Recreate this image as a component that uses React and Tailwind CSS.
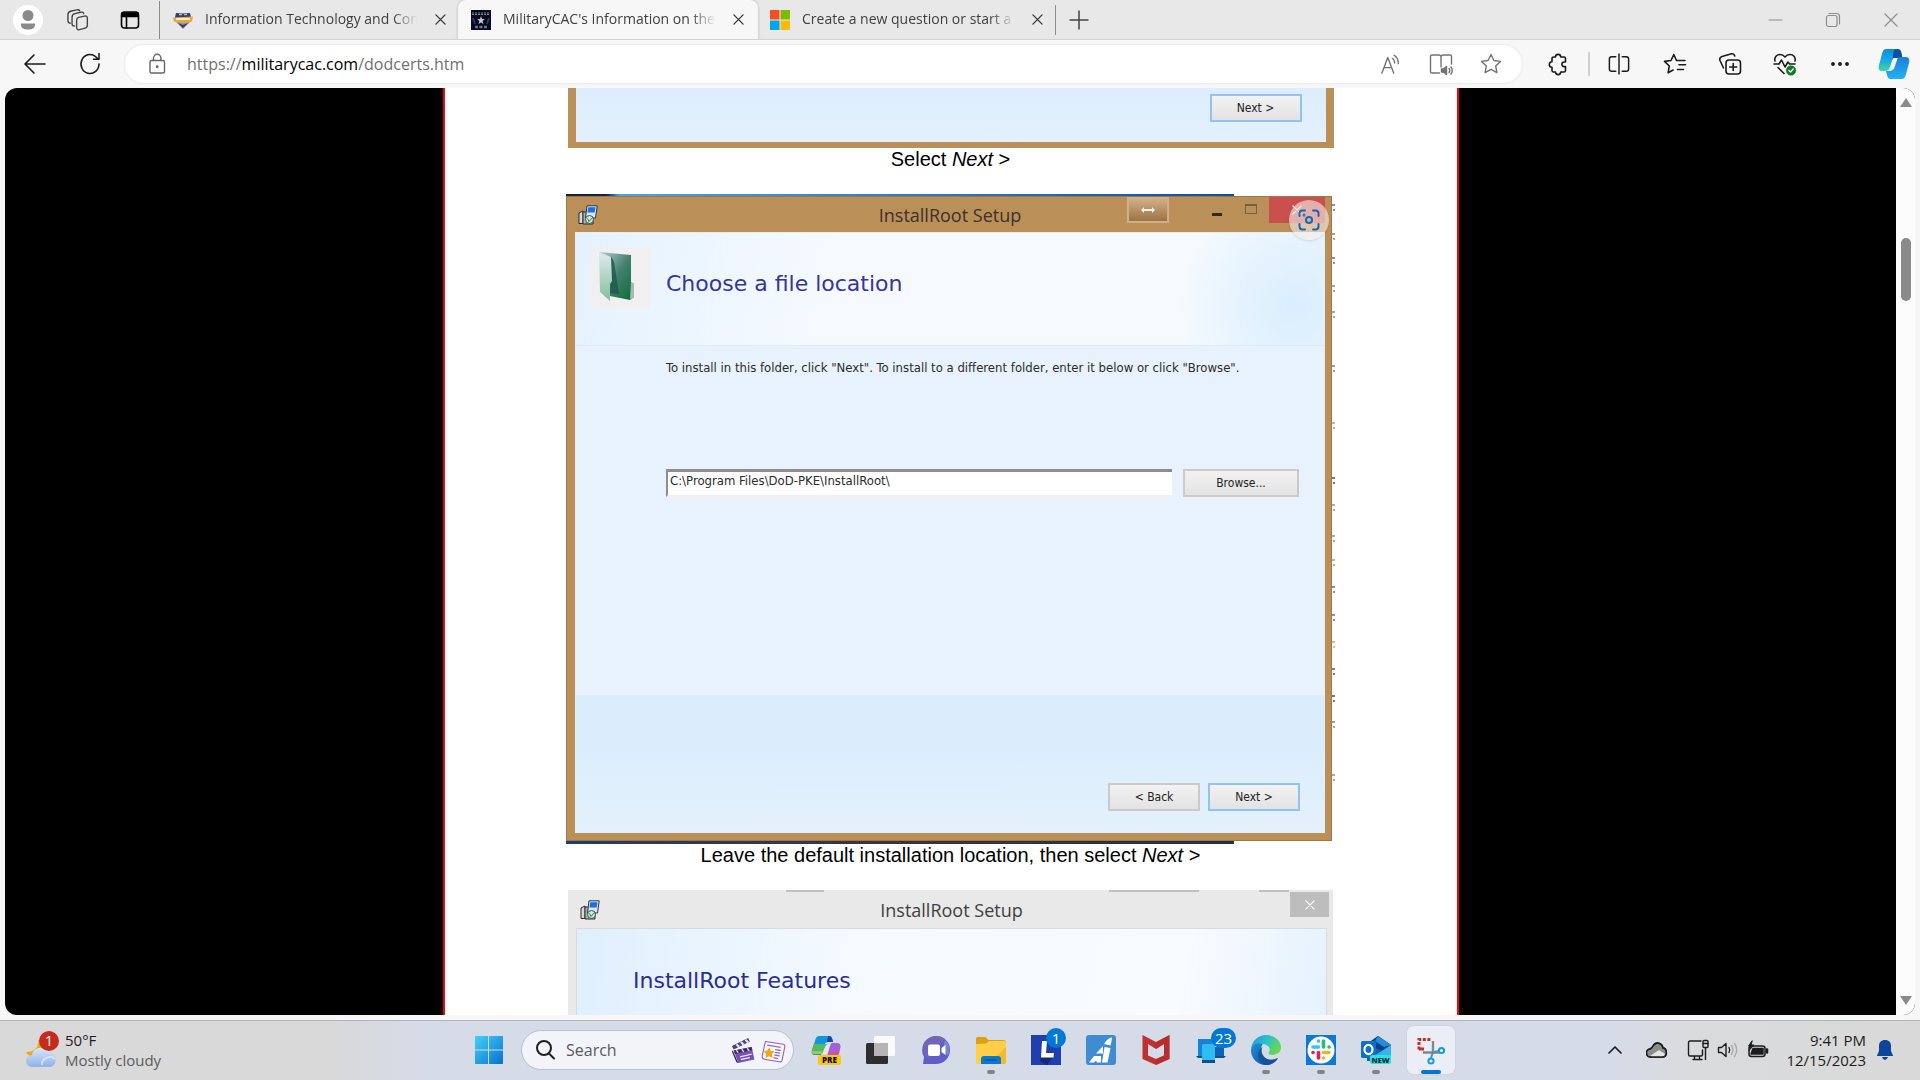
import React from "react";

const uiFont = "font-['Open_Sans','Noto_Sans',sans-serif]";
const dialogFont = "font-['DejaVu_Sans_Condensed','DejaVu_Sans',sans-serif]";

function Icon({ children, className = "size-6", box = "0 0 24 24", stroke = 1.4 }) {
  return (
    <svg viewBox={box} className={className} fill="none" stroke="currentColor" strokeWidth={stroke} strokeLinecap="round" strokeLinejoin="round" aria-hidden="true">
      {children}
    </svg>
  );
}

function IconButton({ label, className = "", children }) {
  return (
    <button type="button" aria-label={label} className={`flex shrink-0 items-center justify-center ${className}`}>
      {children}
    </button>
  );
}

/* ---------- tab strip ---------- */

function CloseGlyph({ className = "size-3" }) {
  return (
    <Icon box="0 0 12 12" className={className} stroke={1.4}>
      <path d="M1 1l10 10M11 1L1 11" />
    </Icon>
  );
}

function ShieldFavicon() {
  return (
    <svg viewBox="0 0 20 20" className="size-5 shrink-0" aria-hidden="true">
      <path d="M3 3h14l1 8-3 3-5 5-5-5-3-3z" fill="#8d8fa8" />
      <path d="M3 3l7 1 7-1 1 5H2z" fill="#2c3f78" />
      <path d="M6 4.500h3M11 4.500h3" stroke="#c9b98a" strokeWidth="1.500" />
      <path d="M0 7.500l20-1-1 5-9 2-9-2z" fill="#e8a63c" />
      <path d="M3 8h14v2H3z" fill="#f3ead7" />
      <path d="M5 13l5 2 5-2-5 5z" fill="#263c78" />
    </svg>
  );
}

function CacFavicon() {
  return (
    <svg viewBox="0 0 20 20" className="size-5 shrink-0" aria-hidden="true">
      <path d="M0 0h20v20H0z" fill="#070a18" />
      <path d="M1 3h18M1 4.500h18" stroke="#7b8398" strokeWidth="1" strokeDasharray="2 1" />
      <path d="M10 6l1 3 2.800.2-2.200 1.800.9 3-2.500-1.600L7.500 14l.9-3-2.200-1.800L9 9z" fill="#c4c9d2" />
      <path d="M4 17h12" stroke="#5d73a5" strokeWidth="2.500" strokeDasharray="3 1.500" />
      <path d="M2 8l2 6M18 8l-2 6" stroke="#27365f" strokeWidth="2" />
    </svg>
  );
}

function MicrosoftFavicon() {
  return (
    <svg viewBox="0 0 20 20" className="size-5 shrink-0" aria-hidden="true">
      <path d="M0 0h9.500v9.500H0z" fill="#f25022" />
      <path d="M10.500 0H20v9.500h-9.500z" fill="#7fba00" />
      <path d="M0 10.500h9.500V20H0z" fill="#00a4ef" />
      <path d="M10.500 10.500H20V20h-9.500z" fill="#ffb900" />
    </svg>
  );
}

function Tab({ icon, title, active, width }) {
  return (
    <div className={`flex h-10 items-center gap-3 ${width} ${active ? "rounded-t-lg bg-[#f7f7f7] shadow-[0_0_3px_rgba(0,0,0,0.25)]" : ""}`}>
      {icon}
      <a href="#tab" className="min-w-0 flex-1 overflow-hidden whitespace-nowrap pb-0.5 text-sm leading-6 text-[#3f3f3f] [mask-image:linear-gradient(90deg,#000_88%,transparent)]">
        {title}
      </a>
      <IconButton label="Close tab" className="size-5 text-[#333]">
        <CloseGlyph className="size-[11px]" />
      </IconButton>
    </div>
  );
}

function TabStrip() {
  return (
    <header className="flex h-10 shrink-0 items-center overflow-hidden border-b border-[#d2d2d2] bg-[#e8e8e8]">
      <div className="flex w-40 shrink-0 items-center border-r border-[#8c8c8c] py-1 pl-[13px]">
        <IconButton label="Profile" className="size-[30px] rounded-full bg-white">
          <svg viewBox="0 0 30 30" className="size-[30px]" aria-hidden="true">
            <circle cx="15" cy="10.500" r="5.500" fill="#8a8a8a" />
            <path d="M8 18.500h14q1 6-7 6t-7-6z" fill="#8a8a8a" />
          </svg>
        </IconButton>
        <IconButton label="Workspaces" className="ml-[23px] size-6 text-[#444]">
          <Icon className="size-[22px]" stroke={1.500}>
            <path d="M12.500 9.200l6.500-1.500q3-.5 3.200 2v8q0 2.500-2.500 3.200l-6 1.600q-3 .6-3.200-2v-8q0-2.700 2-3.300z" />
            <path d="M8 18.500c-1.500 0-2.500-.8-2.500-2.500V9c0-2.500 1-3.500 3-4l6.500-1.500c2-.4 3 .3 3.200 1.500" />
            <path d="M3.500 15.500c-1.500-.3-2.500-1-2.500-3V6.500c0-2.500 1-3.500 3-4L10.500 1c2-.4 3 .2 3.300 1" />
          </Icon>
        </IconButton>
        <IconButton label="Tab actions" className="ml-[30px] size-5 text-black">
          <Icon box="0 0 20 20" className="size-5" stroke={1.600}>
            <rect x="1.500" y="2" width="17" height="16" rx="3" />
            <path d="M2 3h16v3.500H2z" fill="currentColor" />
            <path d="M6.500 7v11" />
          </Icon>
        </IconButton>
      </div>
      <nav aria-label="Tabs" className="flex">
        <Tab icon={<ShieldFavicon />} title="Information Technology and Con" width="w-[298px] pl-[13px] pr-2" />
        <Tab icon={<CacFavicon />} title="MilitaryCAC's Information on the" active width="w-[300px] pl-[13px] pr-2.5" />
        <Tab icon={<MicrosoftFavicon />} title="Create a new question or start a d" width="w-[297px] pl-3 pr-2" />
      </nav>
      <IconButton label="New tab" className="h-[30px] w-[46px] border-l border-[#8c8c8c] text-[#444]">
        <Icon box="0 0 20 20" className="size-5" stroke={1.500}>
          <path d="M10 1v18M1 10h18" />
        </Icon>
      </IconButton>
      <div className="ml-auto flex text-[#8d8d8d]">
        <IconButton label="Minimize" className="h-10 w-[58px]">
          <Icon box="0 0 16 16" className="size-4" stroke={1}><path d="M2 8h13" /></Icon>
        </IconButton>
        <IconButton label="Restore" className="h-10 w-[58px]">
          <Icon box="0 0 16 16" className="size-4" stroke={1.200}>
            <rect x="1.500" y="3.500" width="10.500" height="11" rx="2" />
            <path d="M4 1.500h7.500q3 0 3 3V12" />
          </Icon>
        </IconButton>
        <IconButton label="Close" className="h-10 w-[58px]">
          <Icon box="0 0 16 16" className="size-4" stroke={1.200}><path d="M2 2l12 12M14 2L2 14" /></Icon>
        </IconButton>
      </div>
    </header>
  );
}

/* ---------- address bar ---------- */

const starPath = "M12 2.500l2.900 6 6.600.9-4.800 4.600 1.200 6.600L12 17.400l-5.900 3.200 1.200-6.600L2.500 9.400l6.600-.9z";

function CopilotLogo() {
  return (
    <svg viewBox="0 0 32 32" className="size-8" aria-hidden="true">
      <defs>
        <linearGradient id="cpA" x1="0" y1="0" x2="0" y2="1">
          <stop offset="0" stopColor="#0a8ee0" /><stop offset=".5" stopColor="#19a8e8" /><stop offset="1" stopColor="#43d69a" />
        </linearGradient>
        <linearGradient id="cpB" x1="0" y1="0" x2="0" y2="1">
          <stop offset="0" stopColor="#1b7fd8" /><stop offset="1" stopColor="#22b2f6" />
        </linearGradient>
      </defs>
      <path d="M9 1h10c3 0 3.500 2 4.500 6l.5 3h-4c-3 0-5 0-6 3l-2 6c-1 3-2 4-5 4H4c-3 0-4-2-3-6L4 6c1-4 2-5 5-5z" fill="url(#cpA)" />
      <path d="M17 1h2c3 0 4 1 4.500 4l1 5H15c0-4 0-7 2-9z" fill="#124f9c" />
      <path d="M23 31H13c-3 0-3.500-2-4.500-6l-.5-2h2c4 0 6-1 7-5l2-6c.5-2 1-3 3-3h5c4 0 5 2 4 6l-3 11c-1 4-2 5-5 5z" fill="url(#cpB)" />
      <path d="M15.500 10H20c-2 0-2.500 1-3 3l-2 6c-.5 2.500-1.500 3.500-4 3.700 1-1 1.500-2 2-4z" fill="#f7f7f7" />
    </svg>
  );
}

function Toolbar() {
  return (
    <div className="flex h-12 shrink-0 items-center bg-[#f7f7f7] pl-2 text-[#1b1b1b]">
      <IconButton label="Back" className="h-10 w-[54px]">
        <Icon className="size-6" stroke={1.600}><path d="M22 12H2.500M11 3L2 12l9 9" /></Icon>
      </IconButton>
      <IconButton label="Refresh" className="h-10 w-[56px]">
        <Icon className="size-6" stroke={1.600}><path d="M21 12a9 9.500 0 1 1-3.500-7.500L20 7M21 1.500V7.200h-5.500" /></Icon>
      </IconButton>
      <div className="mx-[7px] flex h-[38px] min-w-0 flex-1 items-center rounded-full bg-white pl-5 pr-1.5 shadow-[0_0_3px_rgba(0,0,0,0.1)]">
        <Icon className="size-6 shrink-0 text-[#666]" stroke={1.400}>
          <rect x="5" y="8.500" width="14.500" height="12.500" rx="1.500" />
          <path d="M8.500 8.500V6a3.700 3.700 0 0 1 7.400 0v2.500" />
          <circle cx="12.200" cy="14.700" r=".7" fill="currentColor" />
        </Icon>
        <a href="https://militarycac.com/dodcerts.htm" className="ml-[18px] min-w-0 flex-1 truncate text-base leading-6 text-[#717171]">
          https://<span className="text-black">militarycac.com</span>/dodcerts.htm
        </a>
        <div className="flex items-center text-[#737373]">
          <IconButton label="Read aloud" className="size-[50px]">
            <Icon className="size-[22px]" stroke={1.500}>
              <path d="M2 22L8.500 5 15 22M4.500 16h8M13.500 6c2 1 2.500 3 2.500 5M15.500 2.500c3.500 2 4.500 5 4.500 9" />
            </Icon>
          </IconButton>
          <IconButton label="Immersive reader" className="size-[50px]">
            <Icon className="size-6" stroke={1.400}>
              <path d="M22.500 12V4.500q0-1.500-1.500-1.500h-6.500Q12 3 12 5q0-2-2.500-2H3Q1.500 3 1.500 4.500v15Q1.500 21 3 21h7.500M12 5v10" />
              <path d="M12.500 17h2l3-2.500v8l-3-2.500h-2z" fill="currentColor" />
              <path d="M20 16.500q1.500 2 0 4M22 15q2.500 3.500 0 7" />
            </Icon>
          </IconButton>
          <IconButton label="Add to favorites" className="size-[50px]">
            <Icon className="size-6" stroke={1.400}><path d={starPath} /></Icon>
          </IconButton>
        </div>
      </div>
      <IconButton label="Extensions" className="h-10 w-[58px]">
        <Icon className="size-6" stroke={1.600}>
          <path d="M8 5h1.500a2.600 2.600 0 0 1 5.200 0H18q1.500 0 1.500 1.500V10h-1.300a2.300 2.300 0 0 0 0 4.600h1.300v3.900q0 1.500-1.500 1.500h-3.300a2.600 2.600 0 0 1-5.200 0H7.500Q6 20 6 18.500V15.200a2.700 2.700 0 0 1 0-5.400V6.500Q6 5 8 5z" />
        </Icon>
      </IconButton>
      <div className="mx-px h-6 w-0.5 bg-[#cfcfcf]" />
      <IconButton label="Split screen" className="h-10 w-[56px]">
        <Icon className="size-[22px]" stroke={1.600}>
          <path d="M8.500 4H4Q1.500 4 1.500 6.500v11Q1.500 20 4 20h4.500M15.500 4H20q2.500 0 2.500 2.500v11Q22.500 20 20 20h-4.500M12 1v22" />
        </Icon>
      </IconButton>
      <IconButton label="Favorites" className="h-10 w-[55px]">
        <Icon className="size-6" stroke={1.600}>
          <path d="M13.500 8.500L10.800 2.500 8 8.500l-6.500.9 4.800 4.600-1.200 6.800 5-2.800M13.500 8.500h8.500M16 12.800h6.500M14.500 17.500h6" />
        </Icon>
      </IconButton>
      <IconButton label="Collections" className="h-10 w-[55px]">
        <Icon className="size-6" stroke={1.600}>
          <rect x="8" y="8" width="14.500" height="14" rx="3" />
          <path d="M15.200 11.500v7M11.700 15h7M5.500 16L2 8.500q-1-3 2-4l9.500-2.700q2.500-.5 3.300 2.200" />
        </Icon>
      </IconButton>
      <IconButton label="Browser essentials" className="h-10 w-[55px]">
        <Icon className="size-6" stroke={1.600}>
          <path d="M2 9C1 5 4 2.500 7 2.500q3 0 5 2.500 2-2.500 5-2.500c3 0 6 2.500 5 6.500M1 12h5l2.500-4 3.500 7 3-5 1.500 2H22M5 15.500l6 6" />
          <circle cx="18" cy="18.500" r="4.800" fill="#107c25" stroke="#107c25" strokeWidth=".5" />
          <path d="M16 18.500l1.500 1.500 2.700-3" stroke="#fff" strokeWidth="1.300" />
        </Icon>
      </IconButton>
      <IconButton label="Settings and more" className="h-10 w-[55px]">
        <svg viewBox="0 0 18 4" className="h-1 w-[18px]" fill="currentColor" aria-hidden="true">
          <circle cx="2" cy="2" r="1.900" /><circle cx="9" cy="2" r="1.900" /><circle cx="16" cy="2" r="1.900" />
        </svg>
      </IconButton>
      <IconButton label="Copilot" className="h-10 w-[53px]">
        <CopilotLogo />
      </IconButton>
    </div>
  );
}

/* ---------- installer screens ---------- */

function SetupIcon() {
  return (
    <svg viewBox="0 0 20 20" className="size-5 shrink-0" aria-hidden="true">
      <path d="M1 8l4-2v12.500H1z" fill="#d9dad6" stroke="#2a2a2a" strokeWidth="1" />
      <path d="M5 7h10v12H5z" fill="#a9b2a4" stroke="#2f2f2f" strokeWidth="1" />
      <path d="M9 .8h10.200L17.500 13H7.500z" fill="#dfe6ef" stroke="#24364f" strokeWidth="1" />
      <path d="M10.200 2.200h7.300L16.700 7.500H9.500z" fill="#1c6fe0" />
      <circle cx="11.500" cy="14.500" r="4" fill="#d5e3d9" stroke="#35584a" />
      <path d="M9.500 13.500l1.500 3 4-4.500" stroke="#1f7c5a" fill="none" />
    </svg>
  );
}

function FolderArt() {
  return (
    <svg viewBox="0 0 60 60" className="size-[60px] shrink-0 bg-[#f0f0f0]" aria-hidden="true">
      <defs>
        <linearGradient id="fBack" x1="0" y1="0" x2="1" y2="1">
          <stop offset="0" stopColor="#b5cdd2" /><stop offset=".5" stopColor="#42806f" /><stop offset="1" stopColor="#0b6b35" />
        </linearGradient>
        <linearGradient id="fFront" x1="0" y1="0" x2="0" y2="1">
          <stop offset="0" stopColor="#dfe9ee" /><stop offset="1" stopColor="#86bfa0" />
        </linearGradient>
      </defs>
      <path d="M8 4l32 3v27l3 2v13l-4 3-20-4z" fill="url(#fBack)" />
      <path d="M20 8l3 6 5 32-9-1z" fill="#1d5a4c" opacity=".85" />
      <path d="M8 4l12 5 1 24-2 3v17L9 44z" fill="url(#fFront)" />
      <path d="M40 34l3 2v13l-4 3z" fill="#a4bcb2" />
    </svg>
  );
}

function DialogButton({ children, width = "w-[92px]", primary }) {
  return (
    <button
      type="button"
      className={`${dialogFont} ${width} h-7 shrink-0 border-2 bg-linear-to-b from-[#f2f2f2] to-[#e3e3e3] text-xs text-[#222] ${primary ? "border-[#8fc3f2]" : "border-[#cacaca]"}`}
    >
      {children}
    </button>
  );
}

function Caption({ children }) {
  return <p className="mb-[23px] text-center font-['Liberation_Sans',Arial,sans-serif] text-xl leading-[23px] text-black">{children}</p>;
}

function PreviousScreen() {
  return (
    <section aria-label="Previous step" className="w-[766px] max-w-full border-x-8 border-b-[6px] border-[#bb8f58] bg-linear-to-b from-[#dcedfd] to-[#e4f1fc]">
      <div className="flex h-[54px] items-start justify-end pr-6 pt-1.5">
        <DialogButton primary>Next &gt;</DialogButton>
      </div>
    </section>
  );
}

const edgeMarks = [
  [9, "#665f52"], [38, "#9b8046"], [62, "#5a63ad"], [90, "#7c858c"], [116, "#7c858c"], [170, "#777"],
  [227, "#9797a0"], [282, "#4b4144"], [309, "#7f92a4"], [340, "#888"], [364, "#bb9850"], [391, "#5b5ea5"], [419, "#5b5ea5"],
  [446, "#c5a769"], [473, "#46486e"], [500, "#444"], [526, "#9c7c42"], [579, "#888"],
];

function LocationScreen() {
  return (
    <section aria-label="Choose a file location" className="relative w-[769px] max-w-full">
      <div className="mr-[101px] h-0.5 bg-linear-to-r from-[#12213c] from-6% via-[#4aa5e8] via-8% to-[#0d4f9e]" />
      <div className="flex">
        <div className="min-w-0 flex-1 border border-[#9d784b] bg-[#bb8f58] pb-[7px] pl-2 pr-1.5">
          <div className="grid h-[35px] grid-cols-[1fr_auto_1fr]">
            <div className="flex items-center pl-[3px]"><SetupIcon /></div>
            <h2 className={`${uiFont} self-center text-lg leading-7 text-[#3a322c]`}>InstallRoot Setup</h2>
            <div className="flex items-start justify-end">
              <IconButton label="Resize" className="mr-7 h-[26px] w-[42px] border-2 border-[#cfb08a] bg-linear-to-b from-[#cfae88] to-[#9d7443]">
                <svg viewBox="0 0 16 8" className="h-2 w-4" aria-hidden="true">
                  <path d="M1 4l3-3v2h8V1l3 3-3 3V5H4v2z" fill="#f4efe8" />
                </svg>
              </IconButton>
              <IconButton label="Minimize setup" className="h-7 w-10 pt-1.5"><span className="h-[3px] w-2.5 bg-[#30281f]" /></IconButton>
              <IconButton label="Maximize setup" className="mr-1 h-6 w-7"><span className="h-2.5 w-3 border border-t-2 border-[#75603f]" /></IconButton>
              <IconButton label="Close setup" className="h-[26px] w-14 bg-[#c9504f] text-white"><CloseGlyph className="size-2.5" /></IconButton>
            </div>
          </div>
          <div className="border border-[#e6eef5] bg-[#e7f2fd]">
            <div className="flex h-28 items-start bg-[radial-gradient(circle_at_96%_65%,#daeefd_0%,transparent_16%),linear-gradient(100deg,#e4f2fe_0%,#f6faff_35%,#f6faff_80%,#edf6fe_100%)] pl-[15px] pt-[15px]">
              <FolderArt />
              <h1 className="ml-[15px] mt-5 font-['DejaVu_Sans',sans-serif] text-[22px] leading-8 text-[#3535a0]">Choose a file location</h1>
            </div>
            <div className={`${dialogFont} h-[350px] border-t border-[#dcebf6] pl-[90px] pr-[25px] pt-3 text-[13px] text-[#2c2c2c]`}>
              <p className="whitespace-nowrap leading-5">To install in this folder, click "Next". To install to a different folder, enter it below or click "Browse".</p>
              <div className="mt-[91px] flex items-center gap-[11px]">
                <input
                  type="text"
                  aria-label="Install folder"
                  defaultValue="C:\Program Files\DoD-PKE\InstallRoot\"
                  className="h-7 min-w-0 flex-1 border-b-2 border-l-2 border-t-[3px] border-[#8d8d8d] border-b-[#efefef] bg-white pb-1.5 pl-0.5"
                />
                <DialogButton width="w-[116px]">Browse...</DialogButton>
              </div>
            </div>
            <div className="flex h-[137px] items-end justify-end gap-2 bg-linear-to-b from-[#dbedfd] from-40% to-[#e4f1fc] pb-[21px] pr-6">
              <DialogButton>&lt; Back</DialogButton>
              <DialogButton primary>Next &gt;</DialogButton>
            </div>
          </div>
        </div>
        <svg viewBox="0 0 3 640" className="h-[640px] w-[3px]" aria-hidden="true">
          {edgeMarks.map(([y, color]) => (
            <path key={y} d={`M0 ${y}h3M1 ${y + 5}h2`} stroke={color} strokeWidth="2" fill="none" opacity=".7" />
          ))}
        </svg>
      </div>
      <div className="mr-[101px] h-[3px] bg-linear-to-r from-[#1f3c6b] via-[#3a3438] to-[#1d3340]" />
      <IconButton label="Visual search" className="absolute right-1.5 top-1.5 size-10 rounded-full bg-[#f4eee8]/60 text-[#1967b3] shadow-sm">
        <Icon className="size-6" stroke={2}>
          <path d="M2.500 8V5.500q0-3 3-3H8M16 2.500h2.500q3 0 3 3V8M21.500 16v2.500q0 3-3 3H16M8 21.500H5.500q-3 0-3-3V16" />
          <circle cx="12" cy="12" r="3" /><circle cx="7" cy="7" r=".5" />
        </Icon>
      </IconButton>
    </section>
  );
}

function FeaturesScreen() {
  return (
    <section aria-label="InstallRoot features" className="w-[765px] max-w-full bg-[#e9e9e9] pb-2 pl-2 pr-1.5">
      <div className="h-0.5 w-full bg-[linear-gradient(90deg,transparent_28%,#999_28%_33%,transparent_33%_71%,#999_71%_83%,transparent_83%_91%,#999_91%_95%,transparent_95%)] opacity-50" />
      <div className="grid h-9 grid-cols-[1fr_auto_1fr]">
        <div className="flex items-center pl-1"><SetupIcon /></div>
        <h2 className={`${uiFont} self-center text-lg leading-7 text-[#3f3f3f]`}>InstallRoot Setup</h2>
        <div className="-mr-0.5 flex items-start justify-end">
          <IconButton label="Close features" className="h-[25px] w-[39px] bg-[#bdbdbd] text-white"><CloseGlyph className="size-2.5" /></IconButton>
        </div>
      </div>
      <div className="h-[400px] border border-[#d6dbe0] bg-[linear-gradient(100deg,#dfefff_0%,#f5faff_35%,#f8fbff_75%,#deeefd_100%)] pl-14 pt-9">
        <h2 className="font-['DejaVu_Sans',sans-serif] text-[22px] leading-8 text-[#2c2c96]">InstallRoot Features</h2>
      </div>
    </section>
  );
}

function Page() {
  return (
    <div className="min-h-0 flex-1 bg-[#f7f7f7] px-[5px] pb-[5px]">
      <div className="flex h-full overflow-hidden rounded-xl bg-black">
        <main className="flex min-w-0 flex-1 justify-center">
          <article className="flex w-[1016px] max-w-full flex-col items-center overflow-hidden border-x-2 border-[#f00] bg-white">
            <PreviousScreen />
            <Caption>Select <em>Next</em> &gt;</Caption>
            <LocationScreen />
            <Caption>Leave the default installation location, then select <em>Next</em> &gt;</Caption>
            <FeaturesScreen />
          </article>
        </main>
        <div className="flex w-[19px] shrink-0 flex-col items-center bg-[#fcfcfc] py-2.5" aria-hidden="true">
          <svg viewBox="0 0 12 9" className="h-[9px] w-3"><path d="M6 0l6 9H0z" fill="#8a8a8a" /></svg>
          <div className="mt-[131px] h-[63px] w-2.5 rounded-full bg-[#8a8a8a]" />
          <svg viewBox="0 0 12 9" className="mt-auto h-[9px] w-3"><path d="M0 0h12L6 9z" fill="#8a8a8a" /></svg>
        </div>
      </div>
    </div>
  );
}

/* ---------- taskbar ---------- */

function Art({ children, className = "size-[30px]" }) {
  return <svg viewBox="0 0 30 30" className={className} aria-hidden="true">{children}</svg>;
}

function WeatherArt() {
  return (
    <svg viewBox="0 0 34 38" className="h-[38px] w-[34px]" aria-hidden="true">
      <defs>
        <linearGradient id="cl" x1="0" y1="0" x2="0" y2="1"><stop offset="0" stopColor="#d7e7fb" /><stop offset="1" stopColor="#8fb0ea" /></linearGradient>
      </defs>
      <path d="M13 8c2 7-3 13-12 13 2 6 16 8 19-2z" fill="#f2a71b" />
      <path d="M7 36a6 6 0 0 1 0-12c1-9 14-9 16-2 10-1 10 14 1 14z" fill="url(#cl)" />
      <path d="M17 34c-1-7 9-10 13-6" stroke="#eef5ff" strokeWidth="2" fill="none" opacity=".6" />
      <circle cx="24" cy="10" r="10" fill="#c42b1c" />
      <text x="24" y="15" textAnchor="middle" fontSize="14" fill="#fff" fontFamily="Open Sans">1</text>
    </svg>
  );
}

const startArt = (
  <Art>
    <defs><linearGradient id="win" x1="0" y1="0" x2="1" y2="1"><stop offset="0" stopColor="#45d0f7" /><stop offset="1" stopColor="#0472cf" /></linearGradient></defs>
    <path d="M1.500 1H14v13.500H1V1.500zM15 1h13.500l.5.500v13H15zM1 15.500h13V29H1.500L1 28.500zM15 15.500h14v13l-.5.500H15z" fill="url(#win)" />
  </Art>
);

const clapperArt = (
  <Art className="size-[27px]">
    <path d="M1 10L19 1l2 4L3 14z" fill="#4b4170" />
    <path d="M6 8l3 3M11 5.500l3 3M16 3l3 3" stroke="#e7defa" strokeWidth="2.500" />
    <path d="M3 15l20-4 3 14-18 4z" fill="#7a50b4" />
    <path d="M3 15l20-4 .7 3.500L4.500 19z" fill="#3d2d5c" />
    <path d="M6 14.500l2 3M12 13.500l2 3M18 12.300l2 3M10 22l13-3M11 25l10-2" stroke="#e7defa" strokeWidth="1.500" />
    <path d="M2 15l6 14-2-1-5-12z" fill="#2e2144" />
  </Art>
);

const newsArt = (
  <Art className="size-[27px]">
    <path d="M6 5l20 3q2 .5 1.500 3l-3 15q-.5 2-3 1.500L6 25q-4-.5-3.500-4z" fill="#fbf7ff" stroke="#8a62bd" strokeWidth="1.200" />
    <path d="M8 9l15 2.500M17 14l6 1M16.500 17l6 1M16 20l6 1M15 23l5 1" stroke="#8a6fc0" strokeWidth="1.500" />
    <path d="M10.500 11.500l1.500 4 4.200.4-3 3 .8 4.400-4-2-3.700 1.700.6-4.400-3-3 4.200-.7z" fill="#f5a70a" />
  </Art>
);

const copilotArt = (
  <Art>
    <path d="M9 1h9c3 0 3 2 4 6h-5c-3 0-4 3-5 7l-2 6H4c-3 0-4-2-3-5L4 6c1-4 2-5 5-5z" fill="#1295df" />
    <path d="M3 9h13l-3 5H1.500zM1 14h12l-1.500 4H1z" fill="#50b963" />
    <path d="M1 16h10.500l-1 3H1.500z" fill="#a7c64a" />
    <path d="M17 1c3 0 4 1 5 6h-6z" fill="#144a9e" />
    <path d="M21 8h4c4 0 5 2 4 6l-1 5q-1 3-4 3H13c3 0 4-3 5-7l1-4q1-3 2-3z" fill="#c158b0" />
    <path d="M21 8h4c4 0 5 2 4 6l-12 4z" fill="#a160dd" />
    <path d="M15 10h4l-3 9h-4z" fill="#e8e6ee" />
    <rect x="7" y="20" width="23" height="10" rx="2.500" fill="#ffc414" />
    <text x="18.500" y="28" textAnchor="middle" fontSize="8" fontWeight="800" fill="#111" fontFamily="Open Sans">PRE</text>
  </Art>
);

const taskViewArt = (
  <Art>
    <rect x="0" y="8" width="22" height="21" rx="1.500" fill="#2e2e2e" />
    <rect x="8" y="1" width="21" height="20" rx="1.500" fill="#fafafa" />
    <path d="M8 8h14v13H8z" fill="#b5b5b5" />
  </Art>
);

const chatArt = (
  <Art>
    <path d="M15 1a14 14 0 1 1 0 28H2l1-7A14 14 0 0 1 15 1z" fill="#5f5dc7" />
    <path d="M15 1a14 14 0 0 1 12 20Q20 16 24 5z" fill="#7582dd" />
    <path d="M3 8A14 14 0 0 1 24 4L8 24q-8-6-5-16z" fill="#7767b2" opacity=".8" />
    <rect x="7" y="9.500" width="12" height="11.500" rx="2" fill="#fff" />
    <path d="M20.500 13l4-3v10l-4-3z" fill="#fff" />
  </Art>
);

const folderArt = (
  <Art>
    <path d="M0 3.500Q0 2 1.500 2h8l3 3H28q1.500 0 1.500 1.500V16H0z" fill="#dfa00f" />
    <path d="M0 9l10-.5 3-2.500h15.500q1.500 0 1.500 1.500v20q0 1.500-1.500 1.500h-27Q0 29 0 27.500z" fill="#ffcf48" />
    <path d="M30 12v15.500q0 1.500-1.500 1.500H12z" fill="#f6ba28" />
    <path d="M5 29v-5q0-3 3-3h14q3 0 3 3v5z" fill="#0878d1" />
    <path d="M9 25h12" stroke="#0553a0" strokeWidth="1.500" />
  </Art>
);

const lArt = (
  <Art>
    <path d="M0 0h30v30H0z" fill="#1f3fae" />
    <path d="M9 26l4-19v12l9 3-6 8z" fill="#122a73" />
    <path d="M11 6h5l-1 12h8l-.5 4.500H10z" fill="#fff" />
  </Art>
);

const aArt = (
  <Art>
    <rect width="30" height="30" rx="3" fill="#3f8dd0" />
    <path d="M3 27.500l5-6.500h7v6.500h-4l-1-2-2 2zM10 18.500L17 11v7.500z" fill="#fff" />
    <path d="M18 9q4-6.500 8-6.500-.5 5-1.500 8zM18.500 12l6 1-3 14.500h-5.500z" fill="#fff" />
  </Art>
);

const mcafeeArt = (
  <Art>
    <path d="M1.500 0L15 7 28.500 0v24L15 30 1.500 24z" fill="#c0302f" />
    <path d="M7 9l8 5 8-5v11.500L15 24l-8-3.500z" fill="#d6dbe9" />
    <path d="M15 7l13.500-7v24L15 30v-6l8-3.500V9l-8 5z" fill="#ac2929" opacity=".5" />
  </Art>
);

const phoneArt = (
  <Art>
    <path d="M2 4h17v17H2z" fill="#1683d8" />
    <path d="M18 12h10v10H18z" fill="#1162b5" />
    <path d="M0 21h30l-2 2H2z" fill="#0f4f97" />
    <path d="M6 11q0-2 2-2h9q2 0 2 2v14H6z" fill="#2fbdf0" />
    <path d="M6 25h13v3H6z" fill="#134b90" />
  </Art>
);

const edgeArt = (
  <Art>
    <defs>
      <linearGradient id="eg" x1="0" y1="0" x2="1" y2=".5"><stop offset="0" stopColor="#1b93d8" /><stop offset=".55" stopColor="#2fc2c8" /><stop offset="1" stopColor="#68d84e" /></linearGradient>
      <linearGradient id="eb" x1="0" y1="0" x2="1" y2="1"><stop offset="0" stopColor="#1b8fdd" /><stop offset="1" stopColor="#124a94" /></linearGradient>
    </defs>
    <path d="M0 14C1 5 8 0 15 0c9 0 15 6 15 12 0 6-5 8-9 8-3 0-4-1-3-3 2-3 0-7-6-8C6 8 2 10 0 14z" fill="url(#eg)" />
    <path d="M0 15C1 9 7 7 12 9c-3 2-2 12 4 15 5 2 9 0 11-1-3 5-7 7-12 7C6 30 0 23 0 15z" fill="url(#eb)" />
    <path d="M12 12c-5 6 1 17 15 11-3 5-7 7-12 7-8-1-12-14-3-18z" fill="#164f96" opacity=".8" />
  </Art>
);

const slackArt = (
  <Art>
    <path d="M0 0h30v30H0z" fill="#0a78d4" />
    <circle cx="15" cy="15" r="13.500" fill="#fff" />
    <g strokeWidth="3.600" strokeLinecap="round" fill="none">
      <path d="M12.500 6v.1M7 12h5.500" stroke="#36c5f0" />
      <path d="M17.500 6v6M23 12h.1" stroke="#2eb67d" />
      <path d="M17.500 17.500H23M17.500 23v.1" stroke="#ecb22e" />
      <path d="M12.500 17.500V23M7 17.500h.1" stroke="#e01e5a" />
    </g>
  </Art>
);

const outlookArt = (
  <Art>
    <path d="M6 9L17 1l13 9v16H6z" fill="#1363b5" />
    <path d="M6 9L17 1l13 9-9 6z" fill="#123f7f" />
    <path d="M14 6l9 6 7-2-13-9z" fill="#1f8de0" />
    <path d="M10 23l20-13v14z" fill="#35b4f1" />
    <rect x="0" y="6" width="15" height="17" rx="1.500" fill="#0c70cb" />
    <ellipse cx="7.500" cy="14.500" rx="4" ry="4.700" fill="none" stroke="#fff" strokeWidth="2.200" />
    <rect x="9" y="20" width="21" height="9" rx="2" fill="#2de1e6" />
    <text x="19.500" y="27.500" textAnchor="middle" fontSize="7.500" fontWeight="800" fill="#072c3b" fontFamily="Open Sans">NEW</text>
  </Art>
);

const snipArt = (
  <Art>
    <path d="M3 14.500V4.500h12" stroke="#c9301f" strokeWidth="3" strokeDasharray="3 1.600" fill="none" />
    <path d="M3 14h5" stroke="#c9301f" strokeWidth="3" fill="none" />
    <path d="M17 6v13M7 17.500h16" stroke="#81878e" strokeWidth="2.400" />
    <path d="M17 17l-2 6M18 17l5-1" stroke="#4d90bd" strokeWidth="2" />
    <circle cx="15" cy="26" r="2.600" fill="none" stroke="#149be6" strokeWidth="2" />
    <circle cx="25.500" cy="15.500" r="2.600" fill="none" stroke="#149be6" strokeWidth="2" />
  </Art>
);

const apps = [
  { name: "Copilot preview", art: copilotArt },
  { name: "Task view", art: taskViewArt },
  { name: "Chat", art: chatArt },
  { name: "File Explorer", art: folderArt, open: true },
  { name: "L", art: lArt, badge: "1" },
  { name: "A", art: aArt },
  { name: "McAfee", art: mcafeeArt },
  { name: "Phone Link", art: phoneArt, badge: "23" },
  { name: "Edge", art: edgeArt, open: true },
  { name: "Slack", art: slackArt, open: true },
  { name: "Outlook", art: outlookArt, open: true },
  { name: "Snipping Tool", art: snipArt, active: true },
];

function TaskbarApp({ name, art, badge, open, active }) {
  return (
    <button type="button" aria-label={name} className={`relative flex size-12 shrink-0 items-center justify-center rounded-md ${active ? "bg-[#ebeef6] shadow-[0_0_1px_rgba(0,0,0,0.2)]" : ""}`}>
      {art}
      {badge && (
        <span className="absolute left-6 top-0.5 flex h-5 min-w-5 items-center justify-center rounded-full bg-[#0078d4] px-1 text-[15px] leading-5 text-white">{badge}</span>
      )}
      {open && <span className="absolute bottom-0 left-5 h-1 w-2 rounded-full bg-[#858585]" />}
      {active && <span className="absolute bottom-0 left-3.5 h-1 w-5 rounded-full bg-[#0078d4]" />}
    </button>
  );
}

function Taskbar() {
  return (
    <footer className="grid h-[60px] shrink-0 grid-cols-[1fr_auto_1fr] items-center border-t border-[#b2b4bb] bg-[linear-gradient(90deg,#d9d9d9_0%,#d9d9d9_17%,#d6dbe8_22%,#d6dbe8_84%,#dadbdd_88%,#d9d9d9_100%)] pb-px">
      <button type="button" className="flex items-center gap-1.5 pl-[25px] text-left">
        <WeatherArt />
        <span className="flex flex-col text-[15px] leading-5 text-[#1c1c1c]">
          <span>50°F</span>
          <span className="text-[#5c5c5c]">Mostly cloudy</span>
        </span>
      </button>
      <nav aria-label="Taskbar" className="flex items-center gap-[7px]">
        <TaskbarApp name="Start" art={startArt} />
        <label className="mx-px flex h-10 w-[273px] items-center rounded-full border border-[#b9c0d0] bg-[#f2f4f9] pl-3 pr-1.5">
          <Icon className="size-6 shrink-0 text-[#1f1f1f]" stroke={2}>
            <circle cx="10" cy="10" r="7" /><path d="M15 15.500l5 5" />
          </Icon>
          <input type="text" placeholder="Search" aria-label="Search" className="ml-2 min-w-0 flex-1 bg-transparent text-base placeholder:text-[#5a5a5a]" />
          <span className="flex gap-0.5">{clapperArt}{newsArt}</span>
        </label>
        {apps.map((app) => <TaskbarApp key={app.name} {...app} />)}
      </nav>
      <div className="flex items-center justify-end pr-[26px] text-[#1c1c1c]">
        <IconButton label="Show hidden icons" className="mr-[19px] size-6">
          <Icon box="0 0 20 20" className="size-5" stroke={1.700}><path d="M4 13l6-6 6 6" /></Icon>
        </IconButton>
        <IconButton label="OneDrive" className="mr-[19px] h-6 w-[22px]">
          <Icon box="0 0 22 18" className="h-[18px] w-[22px]" stroke={1.400}>
            <path d="M5 16a4 4 0 0 1-1-8q2-1 3-3c3-5 9-3 10 2 4 0 5 9 0 9z" fill="#8c8c8c" />
            <path d="M4 15l9-6 6 4q-1 3-3 3H6z" fill="#e4e4e4" stroke="none" />
            <path d="M5 16a4 4 0 0 1-1-8q2-1 3-3c3-5 9-3 10 2 4 0 5 9 0 9z" />
          </Icon>
        </IconButton>
        <button type="button" aria-label="Network, volume and battery" className="mr-[17px] flex items-center gap-2">
          <Icon box="0 0 22 22" className="size-[22px]" stroke={1.400}>
            <path d="M14 2H3Q1.500 2 1.500 3.500v12Q1.500 17 3 17h11q1.500 0 1.500-1.500V11M6 20.500h9M7.500 17v3M12.500 17v3M18.500 9v11.500" />
            <rect x="16" y="1.500" width="5" height="7" rx="1" /><path d="M16 4.500h5" />
          </Icon>
          <Icon box="0 0 22 20" className="h-5 w-[22px]" stroke={1.400}>
            <path d="M1.500 7.500h3L9 3.500v13l-4.500-4h-3zM12 7.500q1.500 2.500 0 5" />
            <path d="M14.500 5.500q3 4.500 0 9M17.500 3.500q4.500 6.500 0 13" stroke="#aaa" />
          </Icon>
          <Icon box="0 0 22 20" className="h-5 w-[22px]" stroke={1.500}>
            <rect x="2" y="6" width="16" height="10.500" rx="2.500" />
            <path d="M6 8.500h10v5.500H4z" fill="currentColor" />
            <path d="M20 9.500v3" stroke="currentColor" strokeWidth="2.500" />
            <path d="M5 1L1.500 6H4L2 10.500 7 5H4.500z" fill="currentColor" strokeWidth="1" />
          </Icon>
        </button>
        <button type="button" className="text-right text-[15px] leading-5">
          <time className="block">9:41 PM</time>
          <time className="block">12/15/2023</time>
        </button>
        <IconButton label="Notifications" className="ml-2.5 size-[18px] text-[#0b469b]">
          <svg viewBox="0 0 18 20" className="h-5 w-[18px]" fill="currentColor" aria-hidden="true">
            <path d="M9 0c4 0 6 2.500 6 6v5l2 4.500v.5H1v-.5L3 11V6c0-3.500 2-6 6-6zM6 17h6q-1 3-3 3t-3-3z" />
          </svg>
        </IconButton>
      </div>
    </footer>
  );
}

export default function App() {
  return (
    <div className={`${uiFont} flex h-screen flex-col overflow-hidden bg-[#f7f7f7]`}>
      <TabStrip />
      <Toolbar />
      <Page />
      <Taskbar />
    </div>
  );
}
